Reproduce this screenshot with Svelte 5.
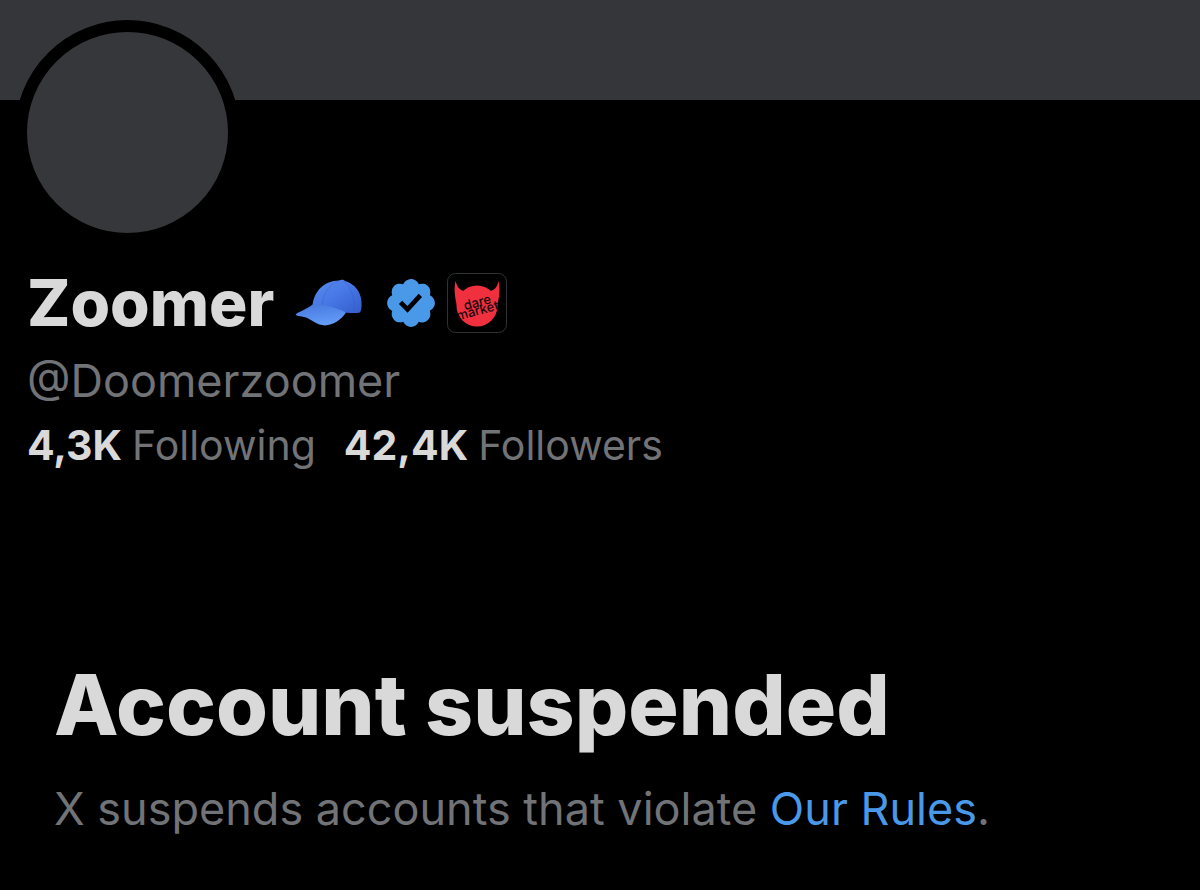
<script lang="ts">
  type Stat = { count: string; label: string };

  let name = 'Zoomer';
  let handle = 'Doomerzoomer';
  let stats: Stat[] = [
    { count: '4,3K', label: 'Following' },
    { count: '42,4K', label: 'Followers' }
  ];
</script>

<main class="page">
  <div class="banner"></div>

  <header class="profile">
    <div class="avatar"></div>

    <div class="name-row">
      <h1 class="name">{name}</h1>
      <svg class="cap" viewBox="0 0 68 48" role="img" aria-label="Billed cap">
        <defs>
          <linearGradient id="crown" x1="0" y1="0" x2="1" y2="1">
            <stop offset="0" stop-color="#5a8cf0" />
            <stop offset="0.5" stop-color="#4677e4" />
            <stop offset="1" stop-color="#345dcc" />
          </linearGradient>
          <linearGradient id="brim" x1="0" y1="0" x2="0.3" y2="1">
            <stop offset="0" stop-color="#4577dd" />
            <stop offset="1" stop-color="#639bf8" />
          </linearGradient>
        </defs>
        <path
          d="M17.500 27C19 12 29 2 44 1.500C46 .4 49 .5 50 2C60 5 66 13 66.500 23C66.700 28 66.500 31 65 33.500C60 34.500 55 34 50 33.500C40 30 29 27 17.500 27Z"
          fill="url(#crown)"
        />
        <path
          d="M44 2C33 6 28 15 27 27M48 2C57 8 60 20 59 33"
          fill="none"
          stroke="#3058c4"
          stroke-width="0.7"
          opacity="0.5"
        />
        <path
          d="M17.500 25.500C28 25.500 41 28 51 33.500C46 41 38 46 30 46.500C22 46 17 41 11 38.500C7 37 3 37.500 .6 36C1 33.500 11 31 17.500 25.500Z"
          fill="url(#brim)"
        />
      </svg>
      <svg class="verified" viewBox="0 0 22 22" role="img" aria-label="Verified account">
        <path
          d="M20.396 11c-.018-.646-.215-1.275-.57-1.816-.354-.54-.852-.972-1.438-1.246.223-.607.27-1.264.14-1.897-.131-.634-.437-1.218-.882-1.687-.47-.445-1.053-.75-1.687-.882-.633-.13-1.290-.083-1.897.14-.273-.587-.704-1.086-1.245-1.440S11.647 1.620 11 1.604c-.646.017-1.273.213-1.813.568s-.969.854-1.240 1.440c-.608-.223-1.267-.272-1.902-.14-.635.130-1.220.436-1.690.882-.445.470-.749 1.055-.878 1.688-.130.633-.080 1.290.144 1.896-.587.274-1.087.705-1.443 1.245-.356.540-.555 1.170-.574 1.817.020.647.218 1.276.574 1.817.356.540.856.972 1.443 1.245-.224.606-.274 1.263-.144 1.896.130.634.433 1.218.877 1.688.470.443 1.054.747 1.687.878.633.132 1.290.084 1.897-.136.274.586.705 1.084 1.246 1.439.540.354 1.170.551 1.816.569.647-.016 1.276-.213 1.817-.567s.972-.854 1.245-1.440c.604.239 1.266.296 1.903.164.636-.132 1.220-.447 1.680-.907.460-.460.776-1.044.908-1.681s.075-1.299-.165-1.903c.586-.274 1.084-.705 1.439-1.246.354-.540.551-1.170.569-1.816zM9.662 14.850l-3.429-3.428 1.293-1.302 2.072 2.072 4.400-4.794 1.347 1.246z"
          fill="#4a99e9"
        />
      </svg>
      <svg class="affiliate" viewBox="0 0 60 60" role="img" aria-label="Dare Market">
        <rect x="0.5" y="0.5" width="59" height="59" rx="8" fill="#000" stroke="#2f3336" />
        <circle cx="30" cy="33" r="20.500" fill="#f0303f" />
        <path
          d="M8.500 8C10 13 12 17 17 18L22 18L10 33C9.500 30 6 19 8.500 8ZM51.500 8C50.500 13 48.500 17 43 18L38 18L50 33C51 29 54 19 51.500 8Z"
          fill="#f0303f"
        />
        <g class="logo-text" transform="rotate(-15 30 32)">
          <text x="31" y="34">dare</text>
          <text x="29" y="42">market</text>
        </g>
      </svg>
    </div>

    <p class="handle">@{handle}</p>

    <div class="stats">
      {#each stats as stat}
        <a class="stat" href="#{stat.label.toLowerCase()}">
          <strong>{stat.count}</strong>
          <span>{stat.label}</span>
        </a>
      {/each}
    </div>
  </header>

  <section class="notice">
    <h2>Account suspended</h2>
    <p>X suspends accounts that violate <a href="#rules">Our Rules</a>.</p>
  </section>
</main>

<style>
  :global(body) {
    background: #000;
  }

  .page {
    color: #d9d9d9;
    font-family: Inter, 'Liberation Sans', sans-serif;
  }

  h1,
  h2,
  p {
    margin: 0;
  }

  a {
    text-decoration: none;
  }

  .banner {
    height: 100px;
    background: #353639;
  }

  .profile {
    padding: 0 27px;
  }

  .avatar {
    position: relative;
    box-sizing: border-box;
    width: 225px;
    height: 225px;
    margin: -80px 0 0 -12px;
    border: 12px solid #000;
    border-radius: 50%;
    background: #36373a;
  }

  .name-row {
    display: flex;
    align-items: center;
    height: 60px;
    margin-top: 28px;
  }

  .name {
    font-size: 64px;
    font-weight: 800;
    line-height: 60px;
  }

  .cap {
    width: 68px;
    height: 48px;
    margin-left: 21px;
  }

  .verified {
    width: 56px;
    height: 56px;
    margin-left: 20px;
  }

  .affiliate {
    width: 60px;
    height: 60px;
    margin-left: 8px;
  }

  .logo-text {
    fill: #16060a;
    font-size: 13px;
    font-weight: 500;
    text-anchor: middle;
  }

  .handle {
    margin-top: 20px;
    color: #717376;
    font-size: 45px;
    line-height: 56px;
  }

  .stats {
    display: flex;
    gap: 28px;
    margin-top: 8px;
    font-size: 41px;
    line-height: 56px;
  }

  .stat {
    display: flex;
    gap: 10px;
    color: #717376;
  }

  .stat strong {
    color: #d9d9d9;
    font-weight: 700;
  }

  .notice {
    padding: 180px 54px 48px;
  }

  .notice h2 {
    font-size: 84px;
    font-weight: 800;
    line-height: 104px;
  }

  .notice p {
    margin-top: 24px;
    color: #717376;
    font-size: 45px;
    line-height: 56px;
  }

  .notice a {
    color: #4a99e9;
  }
</style>
